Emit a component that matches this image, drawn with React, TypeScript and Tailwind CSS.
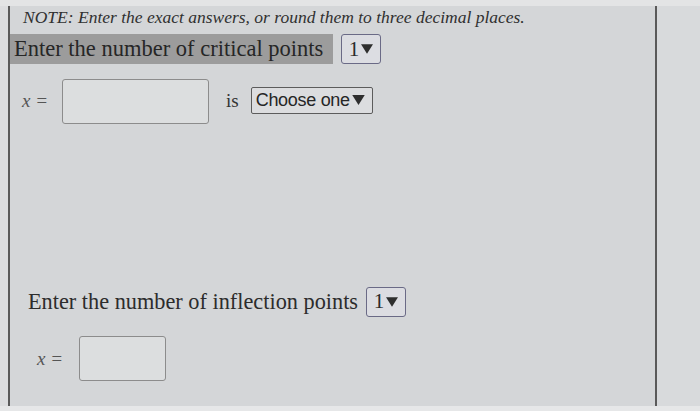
import React from "react";

const serif = { fontFamily: '"Liberation Serif", "DejaVu Serif", serif' };

function Caret({ w }: { w: number }) {
  return (
    <svg width={w} height={Math.round(w * 0.8)} viewBox="0 0 10 8" className="shrink-0">
      <path d="M0 0 H10 L5 8 Z" fill="#2e2e2e" />
    </svg>
  );
}

function NumberSelect() {
  return (
    <div className="flex h-[30px] w-[40px] items-center justify-center gap-[2px] rounded-[3px] border border-[#6a6a86] bg-[#dcdde2] text-[#2a2a2a]">
      <span className="text-[21px] leading-none" style={serif}>
        1
      </span>
      <Caret w={12} />
    </div>
  );
}

function AnswerBox({ width }: { width: string }) {
  return <div className={`h-[45px] ${width} rounded-[3px] border border-[#8c8c8c] bg-[#dcdedf]`} />;
}

export default function App() {
  return (
    <div className="flex h-[411px] w-[700px] flex-col overflow-hidden bg-[#d5d7d9] text-[#2f2f2f]">
      <div className="h-[6px] bg-[#e3e4e5]" />
      <div className="flex flex-1">
        <div className="w-[8px] bg-[#dcdddf]" />
        <div className="flex flex-1 flex-col border-l-2 border-r-2 border-[#5a5a5a] bg-[#d4d6d8]">
          <p className="ml-[13px] mt-[2px] text-[17.5px] italic leading-[19px] text-[#303030]" style={serif}>
            NOTE: Enter the exact answers, or round them to three decimal places.
          </p>
          <div className="mt-[7px] flex items-center gap-[8px]">
            <div
              className="flex h-[30px] w-[323px] items-center bg-[#9c9c9c] pl-[4px] text-[22.5px] text-[#262626]"
              style={serif}
            >
              Enter the number of critical points
            </div>
            <NumberSelect />
          </div>
          <div className="mt-[15px] flex items-center">
            <span className="ml-[12px] w-[40px] text-[19px] italic text-[#555]" style={serif}>
              x =
            </span>
            <AnswerBox width="w-[147px]" />
            <span className="ml-[17px] text-[19px] text-[#333]" style={serif}>
              is
            </span>
            <div className="mb-[3px] ml-[12px] flex h-[27px] w-[122px] items-center gap-[2px] rounded-[2px] border border-[#5c5c5c] bg-[#dcdddf] pl-[4px] font-['Liberation_Sans',Arial,sans-serif] text-[18px] tracking-[-0.3px] text-[#262626]">
              Choose one
              <Caret w={13} />
            </div>
          </div>
          <div className="mt-[161px] flex items-center gap-[8px] pl-[18px]">
            <span className="text-[22.3px] text-[#2c2c2c]" style={serif}>
              Enter the number of inflection points
            </span>
            <NumberSelect />
          </div>
          <div className="mt-[18px] flex items-center">
            <span className="ml-[27px] w-[42px] text-[19px] italic text-[#555]" style={serif}>
              x =
            </span>
            <AnswerBox width="w-[87px]" />
          </div>
        </div>
        <div className="w-[43px] bg-[#d8dadc]" />
      </div>
      <div className="h-[5px] bg-[#e6e7e8]" />
    </div>
  );
}
